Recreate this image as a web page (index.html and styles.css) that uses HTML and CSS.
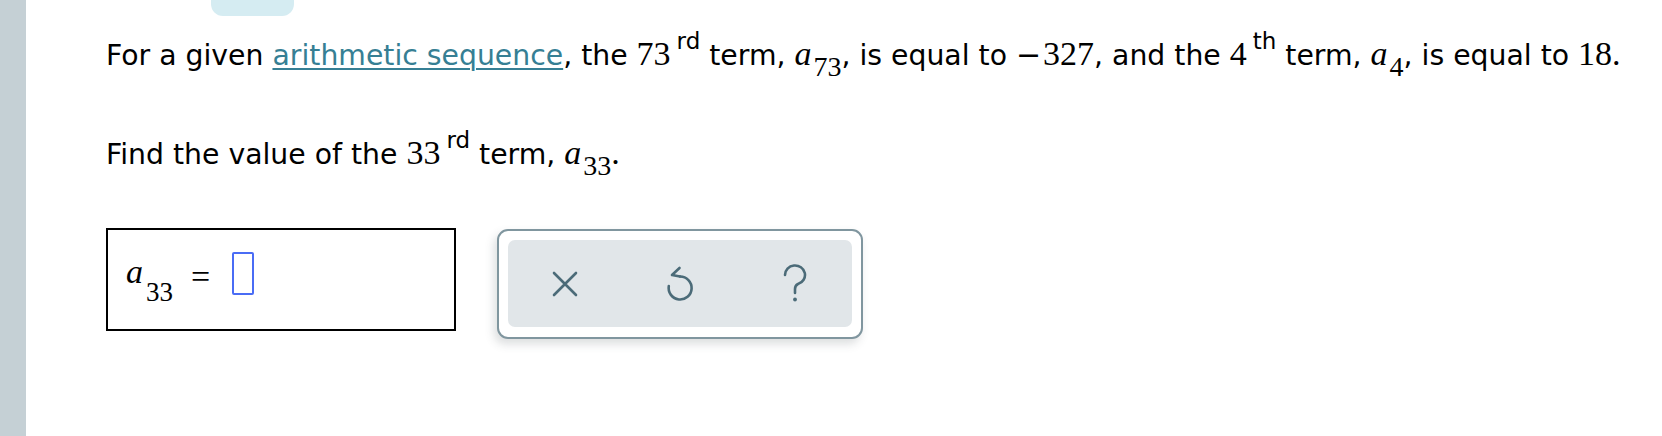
FILE: index.html
```html
<!DOCTYPE html>
<html>
<head>
<meta charset="utf-8">
<link rel="stylesheet" href="styles.css">
</head>
<body>
<div class="page">
  <div class="rail"></div>
  <div class="main">
    <div class="tabrow"><div class="tab"></div></div>
    <p class="q q1">For a given <a class="link" href="#">arithmetic sequence</a>, the <span class="m">73</span><sup class="ord">rd</sup> term, <span class="m"><i class="v">a</i><sub class="ix">73</sub></span>, is equal to <span class="m"><span class="minus">−</span>327</span>, and the <span class="m">4</span><sup class="ord">th</sup> term, <span class="m"><i class="v">a</i><sub class="ix">4</sub></span>, is equal to <span class="m">18.</span></p>
    <p class="q q2">Find the value of the <span class="m">33</span><sup class="ord">rd</sup> term, <span class="m"><i class="v">a</i><sub class="ix">33</sub>.</span></p>
    <div class="answer-row">
      <div class="answer">
        <span class="m ans-var"><i class="v">a</i><sub class="ix ix-low">33</sub></span>
        <span class="m eq">=</span>
        <span class="slot"></span>
      </div>
      <div class="tools">
        <div class="tools-inner">
          <button class="tool" aria-label="Clear">
            <svg width="26" height="26" viewBox="0 0 26 26"><path d="M2 2 L24 24 M24 2 L2 24" fill="none" stroke="#4b6b78" stroke-width="2.6" stroke-linecap="round"/></svg>
          </button>
          <button class="tool" aria-label="Undo">
            <svg width="28" height="36" viewBox="0 0 28 36"><path d="M2.8 20 A11.5 11.5 0 1 0 14 10.5" fill="none" stroke="#4b6b78" stroke-width="2.6" stroke-linecap="round"/><path d="M13.5 2 L6 9 L14 10.5" fill="none" stroke="#4b6b78" stroke-width="2.6" stroke-linecap="round" stroke-linejoin="round"/></svg>
          </button>
          <button class="tool" aria-label="Help">
            <svg width="26" height="40" viewBox="0 0 26 40"><path d="M3 11 A10 9.5 0 1 1 16 20 Q13 21.5 13 25 L13 29" fill="none" stroke="#4b6b78" stroke-width="2.6" stroke-linecap="round"/><circle cx="13" cy="35.5" r="1.9" fill="#4b6b78"/></svg>
          </button>
        </div>
      </div>
    </div>
  </div>
</div>
</body>
</html>
```

FILE: styles.css
```css
html, body {
  margin: 0;
  padding: 0;
  background: #ffffff;
}

body {
  font-family: "DejaVu Sans", Verdana, sans-serif;
  color: #000000;
}

.page {
  display: flex;
  min-height: 436px;
}

.rail {
  flex: none;
  width: 26px;
  background: #c5d0d5;
}

.main {
  flex: 1;
  padding-left: 80px;
}

.tabrow {
  height: 16px;
  padding-left: 105px;
}

.tab {
  width: 83px;
  height: 16px;
  background: #d5ecf2;
  border-radius: 0 0 12px 12px;
}

.q {
  font-size: 28.3px;
  line-height: 40px;
  margin: 0;
  white-space: nowrap;
}

.q1 {
  margin-top: 20px;
}

.q2 {
  margin-top: 59px;
}

.link {
  color: #367f94;
  text-decoration: underline;
  text-decoration-thickness: 2px;
  text-underline-offset: 3px;
}

.m {
  font-family: "Liberation Serif", "Times New Roman", serif;
  font-size: 34px;
  line-height: 34px;
}

.minus {
  font-family: "DejaVu Serif", serif;
  font-size: 30px;
  margin-right: 2px;
}

.v {
  font-style: italic;
}

.ord {
  font-family: "DejaVu Sans", Verdana, sans-serif;
  font-size: 23px;
  line-height: 0;
  vertical-align: 16px;
  margin-left: 6px;
}

.ix {
  font-size: 28px;
  line-height: 0;
  vertical-align: -11px;
  margin-left: 2px;
}

.answer-row {
  display: flex;
  align-items: flex-start;
  gap: 41px;
  margin-top: 53px;
}

.answer {
  box-sizing: border-box;
  width: 350px;
  height: 103px;
  border: 2px solid #000000;
  display: flex;
  align-items: flex-start;
  padding-left: 18px;
}

.ans-var {
  margin-top: 25px;
}

.ix-low {
  font-size: 27px;
  vertical-align: -18px;
  margin-left: 3px;
}

.eq {
  margin-left: 18px;
  margin-top: 30px;
}

.slot {
  box-sizing: border-box;
  width: 22px;
  height: 43px;
  border: 2px solid #4a6cf5;
  border-radius: 2px;
  margin-left: 22px;
  margin-top: 22px;
}

.tools {
  box-sizing: border-box;
  width: 366px;
  height: 110px;
  border: 2px solid #80969f;
  border-radius: 11px;
  background: #ffffff;
  padding: 9px 9px 10px 9px;
  margin-top: 1px;
  box-shadow: -3px 5px 10px rgba(60, 70, 80, 0.18);
}

.tools-inner {
  display: flex;
  height: 100%;
  background: #e1e6e9;
  border-radius: 7px;
}

.tool {
  flex: 1;
  display: flex;
  align-items: center;
  justify-content: center;
  background: none;
  border: 0;
  padding: 0;
  margin: 0;
}
```
